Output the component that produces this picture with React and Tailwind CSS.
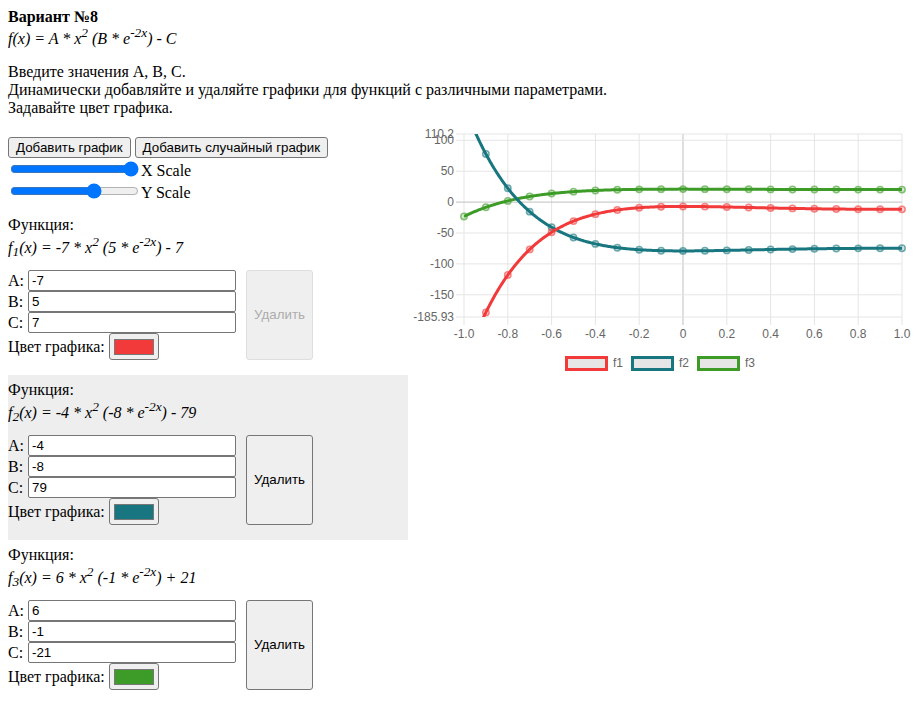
import React from 'react'

const funcs = [
  { n: 1, A: -7, B: 5, C: 7, color: '#f23a3a' },
  { n: 2, A: -4, B: -8, C: 79, color: '#17767f' },
  { n: 3, A: 6, B: -1, C: -21, color: '#3d9c27' },
]

const f = (p, x) => p.A * x * x * (p.B * Math.exp(-2 * x)) - p.C

// chart geometry (svg coords, svg starts at page x=408, y=117)
const L = 56, R = 494, T = 17, B = 200
const YMAX = 110.2, YMIN = -185.93
const px = (x) => L + ((x + 1) / 2) * (R - L)
const py = (y) => T + ((YMAX - y) / (YMAX - YMIN)) * (B - T)

function Chart() {
  const xs = Array.from({ length: 11 }, (_, i) => -1 + i * 0.2)
  const ys = [110.2, 100, 50, 0, -50, -100, -150, -185.93]
  const pts = Array.from({ length: 21 }, (_, i) => -1 + i * 0.1)
  const path = (p) => {
    let d = ''
    for (let i = 0; i <= 400; i++) {
      const x = -1 + i * 0.005
      d += (i ? 'L' : 'M') + px(x).toFixed(2) + ' ' + py(f(p, x)).toFixed(2)
    }
    return d
  }
  const legend = [
    { x: 158.5, tx: 205, c: funcs[0].color, t: 'f1' },
    { x: 224.5, tx: 271, c: funcs[1].color, t: 'f2' },
    { x: 290.5, tx: 337, c: funcs[2].color, t: 'f3' },
  ]
  return (
    <svg width="506" height="270" className="shrink-0" style={{ fontFamily: '"Liberation Sans", Arial, sans-serif' }}>
      <defs>
        <clipPath id="plot">
          <rect x={L - 4} y={T - 4} width={R - L + 8} height={B - T + 8} />
        </clipPath>
        <clipPath id="plotLine">
          <rect x={L} y={T} width={R - L} height={B - T} />
        </clipPath>
      </defs>
      {xs.map((x, i) => (
        <line key={'vx' + i} x1={px(x)} x2={px(x)} y1={T} y2={B + 8} stroke={Math.abs(x) < 1e-9 ? '#bfbfbf' : '#e5e5e5'} strokeWidth="1" />
      ))}
      {ys.map((y, i) => (
        <line key={'hy' + i} x1={L - 8} x2={R} y1={py(y)} y2={py(y)} stroke={y === 0 ? '#bfbfbf' : '#e5e5e5'} strokeWidth="1" />
      ))}
      {ys.map((y, i) => (
        <text key={'ly' + i} x="46" y={py(y) + 4} textAnchor="end" fontSize="12" fill="#666">{String(y)}</text>
      ))}
      {xs.map((x, i) => (
        <text key={'lx' + i} x={px(x)} y="221" textAnchor="middle" fontSize="12" fill="#666">
          {Math.abs(x) < 1e-9 ? '0' : x.toFixed(1)}
        </text>
      ))}
      {[...funcs].reverse().map((p) => (
        <g key={p.n}>
          <path d={path(p)} fill="none" stroke={p.color} strokeWidth="3" clipPath="url(#plotLine)" />
          <g clipPath="url(#plot)">
            {pts.map((x, i) => (
              <circle key={i} cx={px(x)} cy={py(f(p, x))} r="3.2" fill={p.color} fillOpacity="0.2" stroke={p.color} strokeOpacity="0.6" strokeWidth="1.5" />
            ))}
          </g>
        </g>
      ))}
      {legend.map((l) => (
        <g key={l.t}>
          <rect x={l.x} y="240.5" width="40" height="12" fill="#e6e6e6" stroke={l.c} strokeWidth="3" />
          <text x={l.tx} y="250" fontSize="12" fill="#666">{l.t}</text>
        </g>
      ))}
    </svg>
  )
}

const sans = "font-['Liberation_Sans',Arial,sans-serif]"

function Field({ label, value }) {
  return (
    <div className="flex items-center h-[21px]">
      <span className="w-[20px] shrink-0">{label}</span>
      <input
        type="text"
        defaultValue={value}
        className={`${sans} w-[208px] h-[21px] border border-[#767676] rounded-[2px] bg-white px-[3px] text-[13.33px] text-black outline-none`}
      />
    </div>
  )
}

function FuncBlock({ p, shaded, disabled }) {
  const sign = p.C < 0 ? '+' : '-'
  return (
    <div className={`h-[165px] pt-[6px] ${shaded ? 'bg-[#eeeeee]' : ''}`}>
      <div className="h-[18px]">Функция:</div>
      <div className="italic h-[18px] mt-[5px] whitespace-nowrap">
        f<sub className="text-[13.33px]">{p.n}</sub>(x) = {p.A} * x<sup className="text-[13.33px]">2</sup> ({p.B} * e
        <sup className="text-[13.33px]">-2x</sup>) {sign} {Math.abs(p.C)}
      </div>
      <div className="flex items-start mt-[13px]">
        <div className="w-[228px]">
          <Field label="A:" value={p.A} />
          <Field label="B:" value={p.B} />
          <Field label="C:" value={p.C} />
          <div className="flex items-center h-[27px]">
            <span className="w-[101px] shrink-0 whitespace-nowrap">Цвет графика:</span>
            <div className="w-[50px] h-[27px] border border-[#767676] rounded-[3px] bg-[#efefef] flex items-center justify-center">
              <div className="w-[40px] h-[16px] border border-[#777777]" style={{ background: p.color }} />
            </div>
          </div>
        </div>
        <button
          className={`${sans} ml-[10px] w-[67px] h-[90px] rounded-[3px] border text-[13.33px] ${
            disabled ? 'bg-[#efefef] border-[#dedede] text-[#acacac]' : 'bg-[#efefef] border-[#767676] text-black'
          }`}
        >
          Удалить
        </button>
      </div>
    </div>
  )
}

export default function App() {
  return (
    <div className="p-2 font-['Liberation_Serif','Times_New_Roman',serif] text-[16px] leading-[18px] text-black bg-white min-h-screen">
      <div className="font-bold h-[18px]">Вариант №8</div>
      <div className="italic h-[18px] mt-[4px] whitespace-nowrap">
        f(x) = A * x<sup className="text-[13.33px]">2</sup> (B * e<sup className="text-[13.33px]">-2x</sup>) - C
      </div>
      <div className="mt-[15px]">
        <div>Введите значения A, B, C.</div>
        <div>Динамически добавляйте и удаляйте графики для функций с различными параметрами.</div>
        <div>Задавайте цвет графика.</div>
      </div>
      <div className="flex items-start">
        <div className="w-[400px] shrink-0 pt-[20px]">
          <div className="flex gap-[4px] h-[21px]">
            <button className={`${sans} h-[21px] px-[7px] border border-[#767676] rounded-[3px] bg-[#efefef] text-[13.33px] text-black`}>
              Добавить график
            </button>
            <button className={`${sans} h-[21px] px-[7px] border border-[#767676] rounded-[3px] bg-[#efefef] text-[13.33px] text-black`}>
              Добавить случайный график
            </button>
          </div>
          <div className="flex items-center h-[22px]">
            <input type="range" defaultValue={100} className="w-[129px] h-[16px] m-[2px]" />
            <span className="mt-[3px]">X Scale</span>
          </div>
          <div className="flex items-center h-[22px]">
            <input type="range" defaultValue={67} className="w-[129px] h-[16px] m-[2px]" />
            <span className="mt-[3px]">Y Scale</span>
          </div>
          <div className="mt-[8px]">
            <FuncBlock p={funcs[0]} disabled />
            <FuncBlock p={funcs[1]} shaded />
            <FuncBlock p={funcs[2]} />
          </div>
        </div>
        <Chart />
      </div>
    </div>
  )
}
